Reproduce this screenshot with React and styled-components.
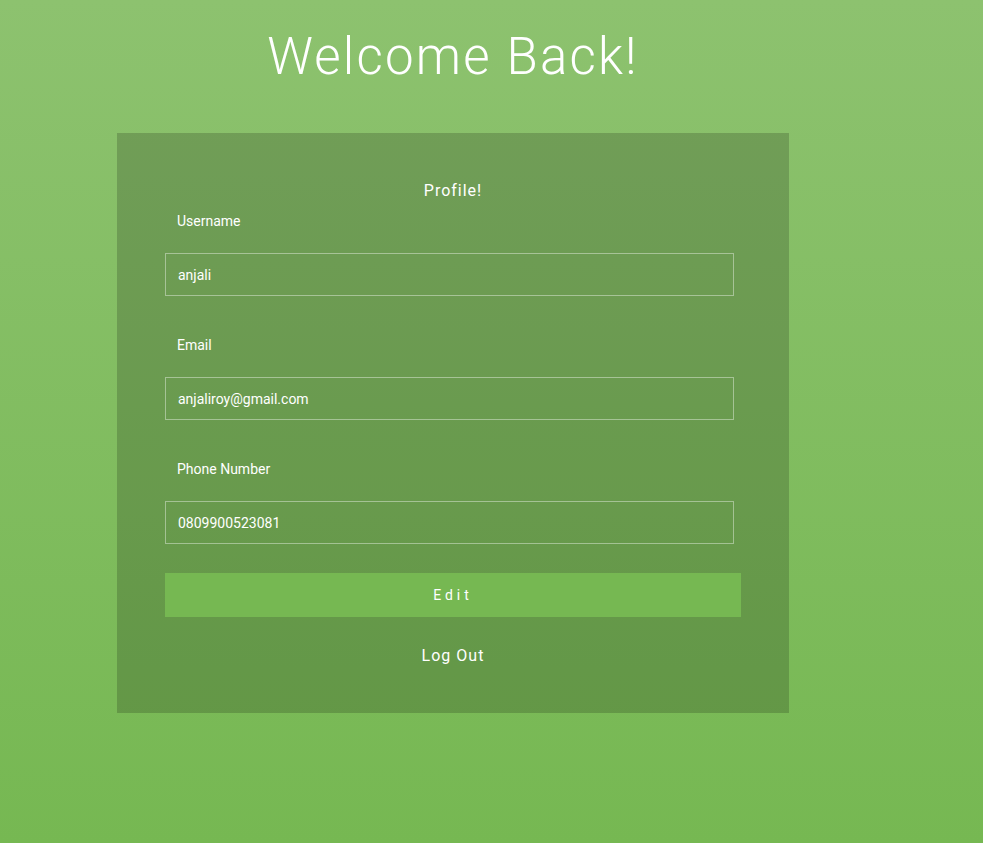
import styled, { createGlobalStyle } from "styled-components";

const GlobalStyle = createGlobalStyle`
  html, body {
    margin: 0;
    padding: 0;
  }
  body {
    min-height: 100vh;
    font-family: Roboto, "Liberation Sans", sans-serif;
    background: linear-gradient(to top, #76b852, #8dc26f);
    color: #fff;
  }
`;

const Page = styled.div`
  min-height: 100vh;
  padding-left: 117px;
  box-sizing: border-box;
`;

const Column = styled.div`
  width: 672px;
  display: flex;
  flex-direction: column;
  align-items: center;
`;

const Title = styled.h1`
  margin: 26px 0 0;
  height: 107px;
  font-size: 51px;
  font-weight: 300;
  letter-spacing: 2.2px;
  line-height: 62px;
  color: #fff;
`;

const Card = styled.div`
  box-sizing: border-box;
  width: 672px;
  height: 580px;
  padding: 46px 48px 0;
  background: rgba(0, 0, 0, 0.18);
  display: flex;
  flex-direction: column;
`;

const Heading = styled.h3`
  margin: 0 0 8px;
  text-align: center;
  font-size: 16px;
  font-weight: 400;
  letter-spacing: 1px;
  line-height: 24px;
`;

const Field = styled.div`
  display: flex;
  flex-direction: column;
  margin-bottom: ${(p) => p.gap}px;
`;

const Label = styled.label`
  padding-left: 12px;
  font-size: 14px;
  line-height: 20px;
  margin-bottom: 22px;
`;

const Input = styled.input`
  box-sizing: border-box;
  width: 569px;
  height: 43px;
  padding: 0 12px;
  background: transparent;
  border: 1px solid rgba(255, 255, 255, 0.4);
  outline: none;
  color: #fff;
  font-family: Roboto, "Liberation Sans", sans-serif;
  font-size: 14px;
`;

const EditButton = styled.button`
  width: 576px;
  height: 44px;
  border: none;
  background: #76b852;
  color: #fff;
  font-family: Roboto, "Liberation Sans", sans-serif;
  font-size: 14px;
  letter-spacing: 4px;
  cursor: pointer;
`;

const LogOut = styled.div`
  margin-top: 29px;
  text-align: center;
  font-size: 16px;
  font-weight: 400;
  letter-spacing: 1px;
`;

const fields = [
  { label: "Username", value: "anjali", gap: 39 },
  { label: "Email", value: "anjaliroy@gmail.com", gap: 39 },
  { label: "Phone Number", value: "0809900523081", gap: 29 },
];

export default function App() {
  return (
    <>
      <GlobalStyle />
      <Page>
        <Column>
          <Title>Welcome Back!</Title>
          <Card>
            <Heading>Profile!</Heading>
            {fields.map((f) => (
              <Field key={f.label} gap={f.gap}>
                <Label>{f.label}</Label>
                <Input defaultValue={f.value} />
              </Field>
            ))}
            <EditButton>Edit</EditButton>
            <LogOut>Log Out</LogOut>
          </Card>
        </Column>
      </Page>
    </>
  );
}
